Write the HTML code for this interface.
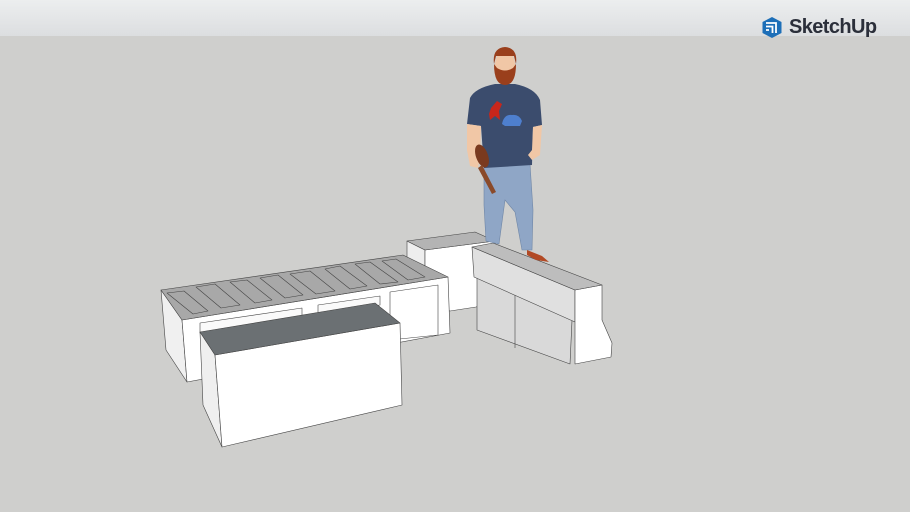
<!DOCTYPE html>
<html><head><meta charset="utf-8"><style>
html,body{margin:0;padding:0;width:910px;height:512px;overflow:hidden;background:#cfcfcd}
svg{position:absolute;left:0;top:0}
.logo{position:absolute;left:761px;top:16px;display:flex;align-items:center;font-family:"Liberation Sans",sans-serif;font-size:20px;font-weight:bold;color:#2b2f3a;letter-spacing:-0.6px}
</style></head><body>
<svg width="910" height="512" viewBox="0 0 910 512">
<defs><linearGradient id="sky" x1="0" y1="0" x2="0" y2="1"><stop offset="0" stop-color="#eceeef"/><stop offset="1" stop-color="#dcdee0"/></linearGradient></defs>
<rect x="0" y="0" width="910" height="36" fill="url(#sky)"/>
<rect x="0" y="36" width="910" height="476" fill="#cfcfcd"/>
<g stroke="#444" stroke-width="0.6" stroke-linejoin="round">
<polygon points="407,241 425,250 425,300 407,290" fill="#eeeeee"/>
<polygon points="425,250 495,241 495,300 476,307 450,311 425,300" fill="#ffffff"/>
<polygon points="407,241 475,232 495,241 425,250" fill="#b4b4b4"/>
<polygon points="161,290 182,320 187,382 166,350" fill="#f0f0f0"/>
<polygon points="182,320 448,277 450,333 187,382" fill="#ffffff"/>
<polygon points="161,290 403,255 448,277 182,320" fill="#a8a8a8"/>
<g fill="none" stroke="#444" stroke-width="0.6">
<polygon points="167,293 184,291 208,311 193,314"/>
<polygon points="196,287 215,284 240,305 221,308"/>
<polygon points="230,282 247,280 272,300 255,303"/>
<polygon points="260,278 278,275 303,295 285,298"/>
<polygon points="290,274 310,271 335,291 316,294"/>
<polygon points="325,269 340,266 367,286 350,289"/>
<polygon points="355,264 370,262 398,282 380,284"/>
<polygon points="382,261 396,259 425,277 408,280"/>
</g>
<polygon points="200,323 302,308 302,318 200,333" fill="#fafafa"/>
<polygon points="318,305 380,296 380,305 318,314" fill="#fafafa"/>
<polygon points="390,292 438,285 438,335 390,340" fill="#ffffff"/>
<polygon points="200,332 215,355 222,447 203,405" fill="#efefef"/>
<polygon points="215,355 400,323 402,405 222,447" fill="#ffffff"/>
<polygon points="200,332 375,303 400,323 215,355" fill="#6b7073"/>
<polygon points="477,277 572,320 570,364 477,330" fill="#d9d9d9"/>
<line x1="515" y1="295" x2="515" y2="348"/>
<polygon points="472,247 575,290 575,322 474,277" fill="#e0e0e0"/>
<polygon points="575,290 602,285 602,320 612,343 611,357 575,364" fill="#ffffff"/>
<polygon points="472,247 493,243 602,285 575,290" fill="#bdbdbd"/>
</g>
<g>
<path d="M499,244 L486,241 L484,205 L484,166 L530,164 L533,210 L532,250 L522,250 L515,212 L505,200 Z" fill="#8fa6c6" stroke="#6f86a6" stroke-width="0.6"/>
<path d="M527,250 L542,256 L549,262 L536,260 L527,255Z" fill="#b24a25"/>
<path d="M470,98 Q475,88 495,84 L515,84 Q535,88 540,100 L542,125 L533,127 L532,165 L484,168 L481,126 L467,124Z" fill="#3b4c6d"/>
<path d="M467,124 L481,126 L480,155 L478,168 L470,166 L467,150Z" fill="#f1c7a6"/>
<path d="M533,127 L542,125 L540,155 L532,160 L528,155 L532,150Z" fill="#f1c7a6"/>
<ellipse cx="505" cy="65" rx="10" ry="14" fill="#f1c7a6"/>
<path d="M494,64 Q492,48 505,47 Q518,48 516,64 L514,56 L496,56Z" fill="#9a3f1c"/>
<path d="M494,64 Q494,85 505,85 Q516,85 516,64 L513,68 Q505,73 497,68Z" fill="#9a3f1c"/>
<path d="M491,108 L497,101 L502,104 L499,111 L500,120 L495,116 L490,120 L489,114Z" fill="#c8261b"/>
<path d="M502,124 Q504,114 512,115 Q519,114 522,121 L520,126 L505,126Z" fill="#4e7fce"/>
<ellipse cx="482" cy="156" rx="6" ry="12" fill="#7a3a1f" transform="rotate(-20 482 156)"/>
<path d="M482,165 L496,192 L492,194 L478,168Z" fill="#8a4a2a"/>
</g>
</svg>
<div class="logo"><svg width="22" height="23" viewBox="0 0 22 23" style="position:static;margin-right:6px"><path d="M11,1 L20.5,6 L20.5,17 L11,22 L1.5,17 L1.5,6Z" fill="#1d6fb8"/><path d="M5,7 h10 v10 M5,10.5 h6.5 v6.5 M5,14 h3" fill="none" stroke="#fff" stroke-width="1.8"/></svg>SketchUp</div>
</body></html>
